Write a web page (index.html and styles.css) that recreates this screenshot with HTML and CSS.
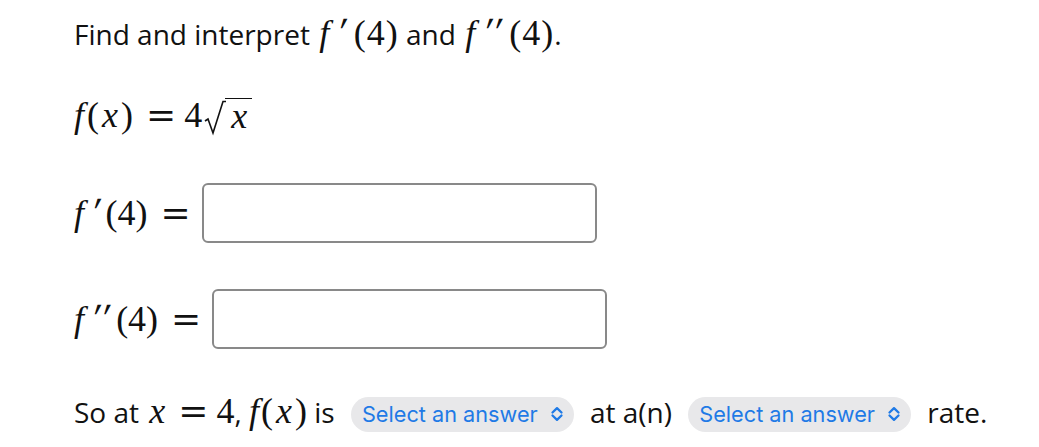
FILE: index.html
```html
<!DOCTYPE html>
<html>
<head>
<meta charset="utf-8">
<link rel="stylesheet" href="styles.css">
</head>
<body>
<div class="page">
  <p class="q">Find and interpret <span class="m"><i class="f">f</i><i class="pr">'</i>(4)</span> and <span class="m"><i class="f">f</i><i class="pr pp">''</i>(4)</span>.</p>
  <p class="fx"><span class="m"><i class="f">f</i>(<i class="x">x</i>)<span class="eq">=</span>4<svg class="radsvg" width="22" height="36" viewBox="0 0 22 36"><path d="M1 21 L4 19 L9 33 L19 1.5 L22 1.5" fill="none" stroke="#111" stroke-width="1.6" stroke-linejoin="miter"/></svg><span class="under"><i class="x">x</i></span></span></p>
  <div class="row r1">
    <span class="m lab"><i class="f">f</i><i class="pr">'</i>(4)<span class="eq">=</span></span>
    <span class="box"></span>
  </div>
  <div class="row r2">
    <span class="m lab"><i class="f">f</i><i class="pr pp">''</i>(4)<span class="eq">=</span></span>
    <span class="box"></span>
  </div>
  <p class="last">So at <span class="m"><i class="x">x</i><span class="eq">=</span>4</span>, <span class="m"><i class="f">f</i>(<i class="x">x</i>)</span> is <span class="sel">Select an answer <svg class="chev" width="14" height="16" viewBox="0 0 14 16"><path d="M2.5 6.5 L7 2.2 L11.5 6.5 M2.5 9.5 L7 13.8 L11.5 9.5" fill="none" stroke="#1f7ae6" stroke-width="2.3" stroke-linecap="round" stroke-linejoin="round"/></svg></span> at a(n) <span class="sel">Select an answer <svg class="chev" width="14" height="16" viewBox="0 0 14 16"><path d="M2.5 6.5 L7 2.2 L11.5 6.5 M2.5 9.5 L7 13.8 L11.5 9.5" fill="none" stroke="#1f7ae6" stroke-width="2.3" stroke-linecap="round" stroke-linejoin="round"/></svg></span> rate.</p>
</div>
</body>
</html>
```
FILE: styles.css
```css
html, body {
  margin: 0;
  background: #fff;
}
.page {
  padding: 15px 0 0 74px;
  font-family: "Open Sans", "Noto Sans", sans-serif;
  font-size: 28px;
  color: #111;
}
p {
  margin: 0;
  line-height: 38px;
}
.m {
  font-family: "Liberation Serif", serif;
  font-size: 36px;
  line-height: 1;
  white-space: nowrap;
}
.m i {
  font-style: italic;
}
.m i.f {
  margin-right: 3px;
}
.m i.x {
  margin: 0 3px;
}
.pr {
  display: inline-block;
  font-size: 40px;
  line-height: 0;
  margin: 0 8px 0 2px;
  transform: skewX(-14deg);
}
.pp {
  letter-spacing: 1px;
}
.q .m {
  letter-spacing: 1px;
  margin-left: 2px;
}
.q .pr {
  margin-right: 9px;
}
.eq {
  font-family: "DejaVu Serif", serif;
  font-size: 36px;
  margin: 0 8px 0 13px;
}
.fx {
  margin-top: 44px;
}
.radsvg {
  vertical-align: -9px;
  margin-left: 2px;
}
.under {
  display: inline-block;
  border-top: 1.6px solid #111;
  line-height: 34px;
  padding: 0 2px 0 3px;
  margin-left: -1px;
  vertical-align: -1px;
}
.row {
  display: flex;
  align-items: center;
}
.lab {
  margin-right: 3px;
}
.r1 {
  margin-top: 47px;
}
.r2 {
  margin-top: 46px;
}
.box {
  display: block;
  height: 56px;
  width: 391px;
  border: 2px solid #898989;
  border-radius: 6px;
}
.last {
  margin-top: 44px;
}
.last .eq {
  margin-left: 10px;
}
.last i.f {
  margin-right: 2px;
}
.sel {
  display: inline-flex;
  align-items: center;
  gap: 12px;
  background: #e8e8ea;
  color: #1f7ae6;
  font-family: "Inter", "Open Sans", sans-serif;
  font-size: 21.7px;
  border-radius: 18px;
  padding: 0 10px 0 11px;
  height: 35px;
  margin: 0 9px 0 9px;
  vertical-align: 1px;
}
.chev {
  display: block;
}
```
